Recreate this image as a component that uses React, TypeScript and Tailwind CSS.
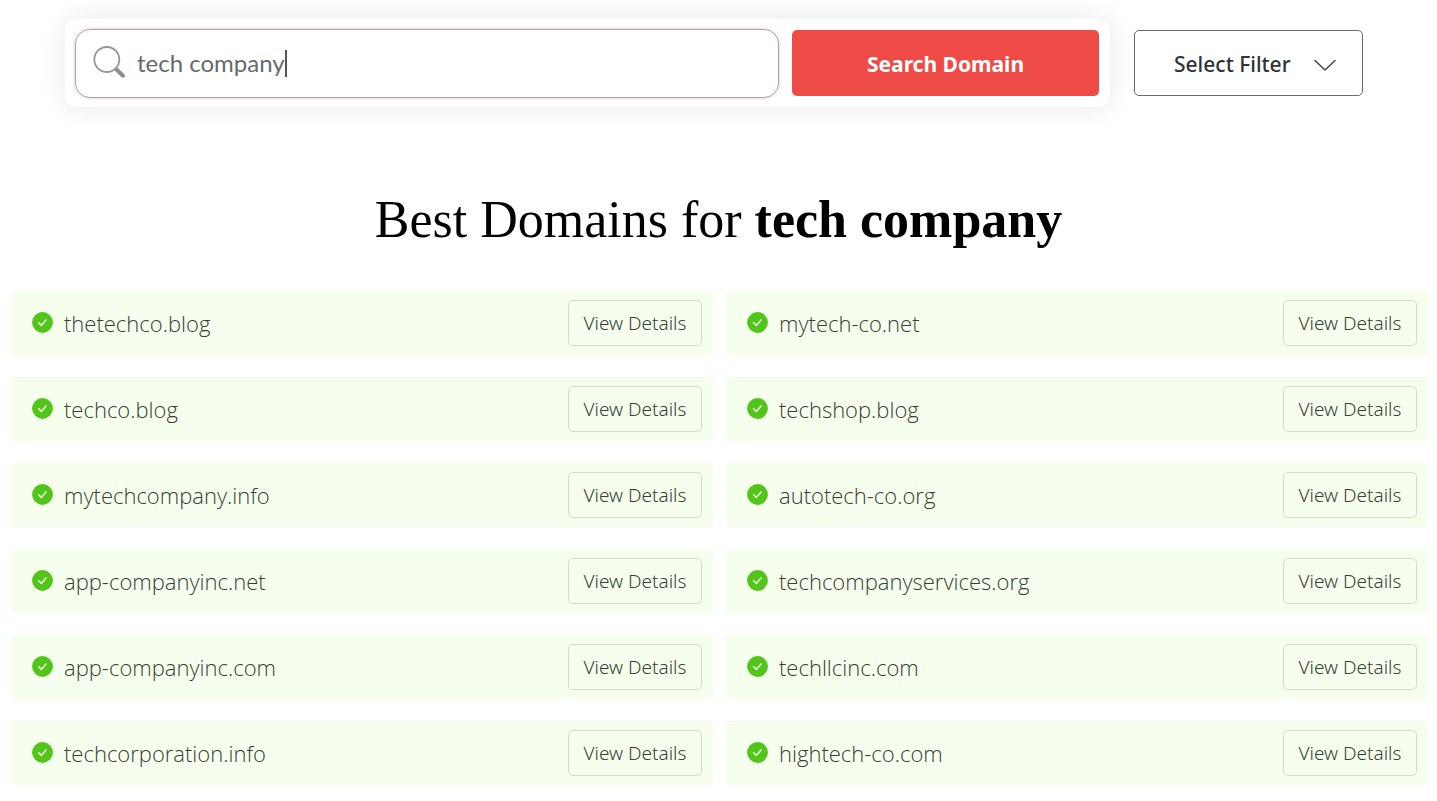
import { useState } from "react";

const domains = [
  "thetechco.blog",
  "mytech-co.net",
  "techco.blog",
  "techshop.blog",
  "mytechcompany.info",
  "autotech-co.org",
  "app-companyinc.net",
  "techcompanyservices.org",
  "app-companyinc.com",
  "techllcinc.com",
  "techcorporation.info",
  "hightech-co.com",
];

function SearchIcon() {
  return (
    <svg className="h-9 w-9 shrink-0" viewBox="0 0 36 36" fill="none" aria-hidden="true">
      <circle cx="14.8" cy="14.5" r="12.5" stroke="#969696" strokeWidth="1.8" />
      <path d="M23.6 23.3L26 25.5" stroke="#8c8c8c" strokeWidth="2.4" />
      <path d="M25 25L31 30.7" stroke="#8c8c8c" strokeWidth="4" strokeLinecap="round" />
    </svg>
  );
}

function ChevronIcon() {
  return (
    <svg
      className="pointer-events-none absolute top-1/2 right-[27px] h-5 w-[22px] -translate-y-1/2"
      viewBox="0 0 22 20"
      fill="none"
      aria-hidden="true"
    >
      <path d="M1 7.5L11 17L21 7.5" stroke="#454545" strokeWidth="1.5" strokeLinejoin="round" strokeLinecap="round" />
    </svg>
  );
}

function CheckIcon() {
  return (
    <svg className="mb-0.5 h-[21px] w-[21px] shrink-0" viewBox="0 0 21 21" fill="none" aria-hidden="true">
      <circle cx="10.5" cy="10.5" r="10.4" fill="#52c41a" />
      <path d="M6.2 10.4L9.4 13.4L14.4 7.4" stroke="#e9fbdc" strokeWidth="1.5" />
    </svg>
  );
}

function DomainRow({ name }: { name: string }) {
  return (
    <li className="flex h-16 items-center rounded-sm bg-[#f6ffed] pr-[11px] pl-[21px]">
      <CheckIcon />
      <span className="ml-[11px] flex-1 font-['Open_Sans',sans-serif] text-[22px] font-light text-[#364133]">
        {name}
      </span>
      <button
        type="button"
        aria-label={`View Details of ${name}`}
        className="h-[46px] w-[134px] rounded-[5px] border border-[#d3dccd] text-[19px] font-light whitespace-nowrap text-[#364133]"
      >
        View Details
      </button>
    </li>
  );
}

export default function App() {
  const [query, setQuery] = useState("tech company");

  return (
    <main className="min-h-screen bg-white pb-4 font-['Noto_Sans','Open_Sans',sans-serif]">
      <form
        className="flex items-center gap-6 pt-[19px] pr-[74px] pl-[65px]"
        onSubmit={(event) => event.preventDefault()}
      >
        <div className="flex h-[88px] flex-1 items-center gap-[13px] rounded-xl bg-white pr-[11px] pl-[10px] shadow-[0_0_30px_rgba(0,0,0,0.09)]">
          <label className="flex h-[69px] flex-1 items-center rounded-[15px] border border-[#b49fb2] pl-4 shadow-[0_0_3px_rgba(150,90,140,0.45)]">
            <SearchIcon />
            <input
              type="text"
              aria-label="Search domains"
              value={query}
              onChange={(event) => setQuery(event.target.value)}
              className="ml-[9px] [field-sizing:content] font-['Lato',sans-serif] text-2xl text-[#666b6b] caret-transparent outline-none"
            />
            <span className="h-[27px] w-0.5 bg-[#555]" />
          </label>
          <button
            type="submit"
            className="h-[66px] w-[307px] rounded-[5px] bg-[#ef4b46] pt-[3px] text-[21px] font-bold text-white"
          >
            Search Domain
          </button>
        </div>
        <div className="relative w-[229px]">
          <select
            aria-label="Select Filter"
            className="h-[66px] w-full appearance-none rounded-[5px] border border-[#6b6b6b] bg-white pt-[3px] pl-[39px] text-[21px] font-medium text-[#2f3337]"
          >
            <option>Select Filter</option>
          </select>
          <ChevronIcon />
        </div>
      </form>

      <h1 className="mt-[79px] text-center font-['Liberation_Serif',serif] text-[52px] leading-[68px] text-black">
        Best Domains for <strong className="font-bold">{query}</strong>
      </h1>

      <ul className="mt-[37px] grid grid-cols-2 gap-x-[13px] gap-y-[22px] pr-[9px] pl-[11px]">
        {domains.map((name) => (
          <DomainRow key={name} name={name} />
        ))}
      </ul>
    </main>
  );
}
